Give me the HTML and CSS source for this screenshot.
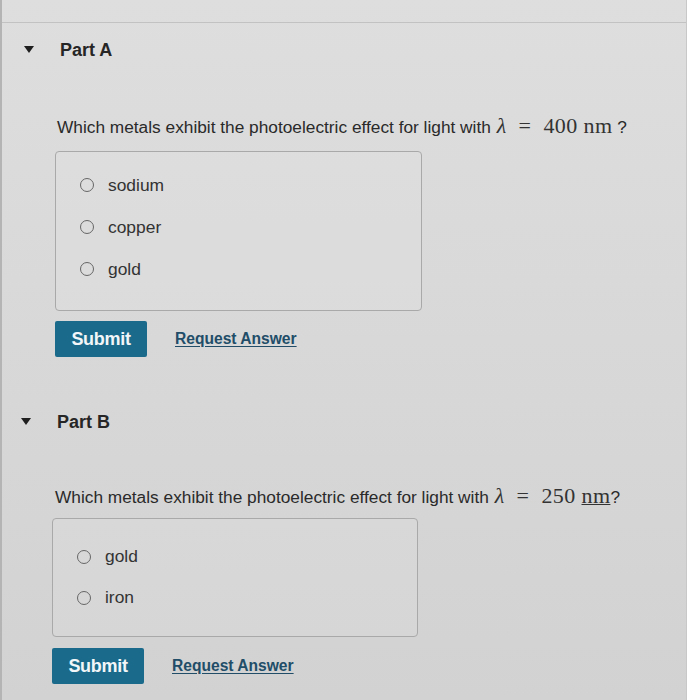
FILE: index.html
```html
<!DOCTYPE html>
<html lang="en">

<head>
    <meta charset="UTF-8">
    <meta name="viewport" content="width=device-width, initial-scale=1.0">
    <title>Photoelectric Effect</title>
    <link rel="stylesheet" href="styles.css">
</head>

<body>
    <div class="page">
        <div class="topbar"></div>

        <!-- Part A -->
        <section class="part">
            <div class="part-header">
                <svg class="caret" viewBox="0 0 10 7"><polygon points="0,0 10,0 5,7" fill="#1f1f1f"></polygon></svg>
                <span class="part-title">Part A</span>
            </div>

            <p class="question">Which metals exhibit the photoelectric effect for light with <span class="math"><i>λ</i><span class="eq">=</span>400 nm</span> ?</p>

            <div class="choices">
                <label class="choice"><span class="radio"></span>sodium</label>
                <label class="choice"><span class="radio"></span>copper</label>
                <label class="choice"><span class="radio"></span>gold</label>
            </div>

            <div class="actions">
                <button class="submit">Submit</button>
                <a href="#" class="request">Request Answer</a>
            </div>
        </section>

        <!-- Part B -->
        <section class="part part-b">
            <div class="part-header">
                <svg class="caret" viewBox="0 0 10 7"><polygon points="0,0 10,0 5,7" fill="#1f1f1f"></polygon></svg>
                <span class="part-title">Part B</span>
            </div>

            <p class="question">Which metals exhibit the photoelectric effect for light with <span class="math"><i>λ</i><span class="eq">=</span>250 <span class="unit">nm</span></span>?</p>

            <div class="choices">
                <label class="choice"><span class="radio"></span>gold</label>
                <label class="choice"><span class="radio"></span>iron</label>
            </div>

            <div class="actions">
                <button class="submit">Submit</button>
                <a href="#" class="request">Request Answer</a>
            </div>
        </section>
    </div>
</body>

</html>
```

FILE: styles.css
```css
body {
    margin: 0;
    padding: 0;
    font-family: "Liberation Sans", Arial, sans-serif;
    color: #333;
    background: linear-gradient(180deg, #dedede 0%, #d9d9d9 40%, #d2d2d2 100%);
    height: 700px;
    overflow: hidden;
}

.page {
    border-left: 2px solid #b4b4b4;
    border-right: 1px solid #c8c8c8;
    height: 700px;
    box-sizing: border-box;
}
/* Top bar */

.topbar {
    height: 22px;
    border-bottom: 1px solid #c2c2c2;
}
/* Parts */

.part {
    padding-left: 53px;
}

.part-b {
    padding-left: 50px;
    margin-top: 53px;
}

.part-header {
    position: relative;
    display: flex;
    align-items: center;
    height: 24px;
    margin-top: 15px;
}

.part-b .part-header {
    margin-top: 0;
}

.caret {
    position: absolute;
    left: -31px;
    top: 8px;
    width: 10px;
    height: 7px;
}

.part-title {
    margin-left: 5px;
    font-size: 18px;
    font-weight: bold;
    color: #262626;
}

.question {
    margin: 52px 0 0 2px;
    height: 24px;
    line-height: 24px;
    font-size: 17.3px;
    color: #2a2a2a;
}

.part-b .question {
    margin-top: 50px;
    margin-left: 3px;
}

.math {
    font-family: "Liberation Serif", "DejaVu Serif", serif;
    font-size: 22px;
    letter-spacing: 0.4px;
    color: #333;
}

.math i {
    margin-left: 1px;
}

.eq {
    margin: 0 12px;
}

.unit {
    text-decoration: underline;
    text-decoration-thickness: 1px;
}
/* Choices */

.choices {
    width: 365px;
    margin-top: 13px;
    padding: 12px 0 20px;
    border: 1px solid #a9a9a9;
    border-radius: 4px;
    background: rgba(255, 255, 255, 0.08);
}

.part-b .choices {
    margin-top: 10px;
    width: 364px;
    padding: 17px 0 18px;
}

.choice {
    display: flex;
    align-items: center;
    height: 42px;
    padding-left: 24px;
    font-size: 17.4px;
    color: #333;
}

.part-b .choice {
    height: 41px;
}

.radio {
    width: 12px;
    height: 12px;
    border: 1.6px solid #666;
    border-radius: 50%;
    margin-right: 14px;
}
/* Actions */

.actions {
    display: flex;
    align-items: center;
    gap: 28px;
    margin-top: 10px;
}

.part-b .actions {
    margin-top: 11px;
}

.submit {
    width: 92px;
    height: 36px;
    border: none;
    border-radius: 2px;
    background: #1a6b8b;
    color: #f2f6f8;
    font-family: "Liberation Sans", Arial, sans-serif;
    font-size: 18px;
    font-weight: bold;
    letter-spacing: -0.3px;
    padding: 0;
}

.request {
    font-size: 15.6px;
    font-weight: bold;
    color: #214d68;
    text-decoration: underline;
    text-underline-offset: 2px;
}
```
